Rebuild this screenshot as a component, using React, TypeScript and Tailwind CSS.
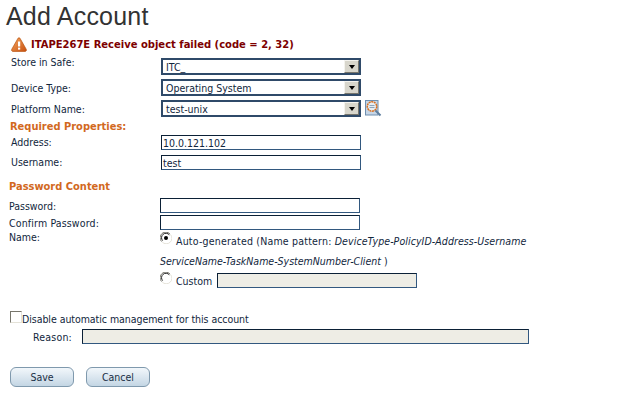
import React from "react";

const font = "[font-family:'DejaVu_Sans_Condensed','DejaVu_Sans',sans-serif]";

function Warn() {
  return (
    <svg width="16" height="15" viewBox="0 0 16 15" className="block shrink-0">
      <defs>
        <linearGradient id="wg" x1="0" y1="0" x2="1" y2="1">
          <stop offset="0" stopColor="#f6a860" />
          <stop offset="1" stopColor="#c8500f" />
        </linearGradient>
      </defs>
      <path d="M8 0.8 C8.8 0.8 9 1.2 9.4 2 L15.2 12.2 C15.8 13.4 15.2 14.4 14 14.4 L2 14.4 C0.8 14.4 0.2 13.4 0.8 12.2 L6.6 2 C7 1.2 7.2 0.8 8 0.8 Z" fill="url(#wg)" stroke="#b9520f" strokeWidth="0.7" />
      <rect x="7" y="4.5" width="2.2" height="5" fill="#fff" />
      <rect x="7" y="10.6" width="2.2" height="2" fill="#fff" />
    </svg>
  );
}

function Lens() {
  return (
    <svg width="17" height="17" viewBox="0 0 17 17" className="block shrink-0 ml-[4px]">
      <rect x="0.5" y="0.5" width="12.5" height="14.5" fill="#c7d6e6" stroke="#6f8fb0" />
      <circle cx="7" cy="6.5" r="4.7" fill="#e6edf3" stroke="#d9701f" strokeWidth="1.5" strokeDasharray="2 0.6" />
      <path d="M4.5 5.5h5M4.5 7.5h5" stroke="#8fa5bb" />
      <path d="M10.5 10.5L15.5 15.5" stroke="#5f7f9f" strokeWidth="2" />
    </svg>
  );
}

function Select({ value }: { value: React.ReactNode }) {
  return (
    <div className="w-[200px] h-[17px] border-2 border-[#2f4a69] bg-white flex items-stretch">
      <div className="flex-1 pl-[3px] leading-[15px] text-[#11263c]">{value}</div>
      <div className="w-[15px] bg-[#d8d6cc] border-t border-l border-t-[#f4f3ee] border-l-[#f4f3ee] border-r border-b border-r-[#77756c] border-b-[#77756c] flex items-center justify-center">
        <div className="w-0 h-0 border-l-[3.5px] border-r-[3.5px] border-t-[4px] border-l-transparent border-r-transparent border-t-black" />
      </div>
    </div>
  );
}

function Input({ value, cls, disabled }: { value?: string; cls: string; disabled?: boolean }) {
  return (
    <div
      className={`h-[15px] border border-t-[#0b2036] border-l-[#0b2036] border-r-[#32587f] border-b-[#32587f] pl-[1px] leading-[15px] text-[#11263c] ${disabled ? "bg-[#eeede5]" : "bg-white"} ${cls}`}
    >
      {value}
    </div>
  );
}

function Radio({ on, cls }: { on?: boolean; cls?: string }) {
  return (
    <svg width="12" height="12" viewBox="0 0 12 12" className={`block shrink-0 ${cls ?? ""}`}>
      <circle cx="6" cy="6" r="5.5" fill="#fff" />
      <path d="M10 2 A5.5 5.5 0 0 0 1.5 9.5" fill="none" stroke="#77756c" strokeWidth="1" />
      <path d="M9.3 2.8 A4.4 4.4 0 0 0 2.6 8.6" fill="none" stroke="#222" strokeWidth="1" />
      <path d="M2.2 10 A5.5 5.5 0 0 0 10.4 2.4" fill="none" stroke="#e4e2d8" strokeWidth="1" />
      {on && <circle cx="6" cy="6" r="2" fill="#000" />}
    </svg>
  );
}

function Btn({ children }: { children: React.ReactNode }) {
  return (
    <div className="w-[64px] h-[20px] rounded-[6px] border border-[#7f99ad] bg-gradient-to-b from-[#f2f7fb] to-[#c4d6e4] flex items-center justify-center text-[#1a2f45]">
      {children}
    </div>
  );
}

const label = "w-[150px] shrink-0 text-[#11263c]";

export default function App() {
  return (
    <div className={`w-[629px] h-[414px] bg-white overflow-hidden text-[10.5px] leading-[14px] text-[#11263c] ${font}`}>
      <h1 className="pl-[6px] pt-[1px] h-[35px] text-[25px] leading-[31px] text-[#333] [font-family:'Liberation_Sans',sans-serif] tracking-[0.2px]">
        Add Account
      </h1>

      <div className="pl-[11px] h-[19px] flex items-center gap-[4px]">
        <Warn />
        <span className="font-bold text-[11.1px] text-[#7d0000]">ITAPE267E Receive object failed (code = 2, 32)</span>
      </div>

      <div className="pl-[11px] mt-[4px] flex flex-col gap-[4px]">
        <div className="flex h-[17px]">
          <span className={`${label} -mt-[3px]`}>Store in Safe:</span>
          <Select value={<>ITC<span className="relative -top-[1px]">_</span></>} />
        </div>
        <div className="flex h-[17px] items-center">
          <span className={label}>Device Type:</span>
          <Select value="Operating System" />
        </div>
        <div className="flex h-[17px] items-center">
          <span className={label}>Platform Name:</span>
          <Select value="test-unix" />
          <Lens />
        </div>
      </div>

      <div className="pl-[10px] mt-[1px] font-bold text-[11px] text-[#d2691e] h-[15px] leading-[17px]">Required Properties:</div>

      <div className="pl-[11px] mt-[2px] flex flex-col gap-[5px]">
        <div className="flex h-[15px]">
          <span className={label}>Address:</span>
          <Input value="10.0.121.102" cls="w-[200px]" />
        </div>
        <div className="flex h-[15px]">
          <span className={label}>Username:</span>
          <Input value="test" cls="w-[200px]" />
        </div>
      </div>

      <div className="pl-[9px] mt-[8px] font-bold text-[11px] text-[#d2691e] h-[15px] leading-[17px]">Password Content</div>

      <div className="pl-[9px] mt-[5px] flex flex-col gap-[2px]">
        <div className="flex h-[15px] items-center">
          <span className={`${label} w-[151px]`}>Password:</span>
          <Input cls="w-[200px]" />
        </div>
        <div className="flex h-[15px] items-center">
          <span className={`${label} w-[151px] tracking-[0.15px]`}>Confirm Password:</span>
          <Input cls="w-[200px]" />
        </div>
      </div>

      <div className="pl-[9px] flex mt-[1px]">
        <span className="w-[151px] shrink-0 -mt-[1px]">Name:</span>
        <div className="flex flex-col">
          <div className="flex items-start h-[20px]">
            <Radio on cls="mt-[1px]" />
            <span className="ml-[4px] mt-[3px] whitespace-nowrap">
              <span className="tracking-[0.2px]">Auto-generated (Name pattern: </span>
              <i className="tracking-[0.08px]">DeviceType-PolicyID-Address-Username</i>
            </span>
          </div>
          <div className="mt-[3px] h-[15px] whitespace-nowrap">
            <i>ServiceName-TaskName-SystemNumber-Client</i> )
          </div>
          <div className="flex items-start h-[18px] mt-[1px]">
            <Radio cls="mt-[2px]" />
            <span className="ml-[4px] mt-[4px] w-[41px]">Custom</span>
            <Input cls="w-[200px] mt-[3px]" disabled />
          </div>
        </div>
      </div>

      <div className="pl-[10px] mt-[23px] flex items-start h-[14px]">
        <div className="w-[12px] h-[12px] border border-t-[#77756c] border-l-[#77756c] border-b-[#e4e2d8] border-r-[#e4e2d8] bg-white" />
        <span className="mt-[1px] whitespace-nowrap tracking-[-0.05px]">Disable automatic management for this account</span>
      </div>

      <div className="pl-[33px] mt-[4px] flex items-center h-[15px]">
        <span className="w-[49px] shrink-0 tracking-[0.2px]">Reason:</span>
        <Input cls="w-[447px]" disabled />
      </div>

      <div className="pl-[10px] mt-[23px] flex gap-[12px]">
        <Btn>Save</Btn>
        <Btn>Cancel</Btn>
      </div>
    </div>
  );
}
